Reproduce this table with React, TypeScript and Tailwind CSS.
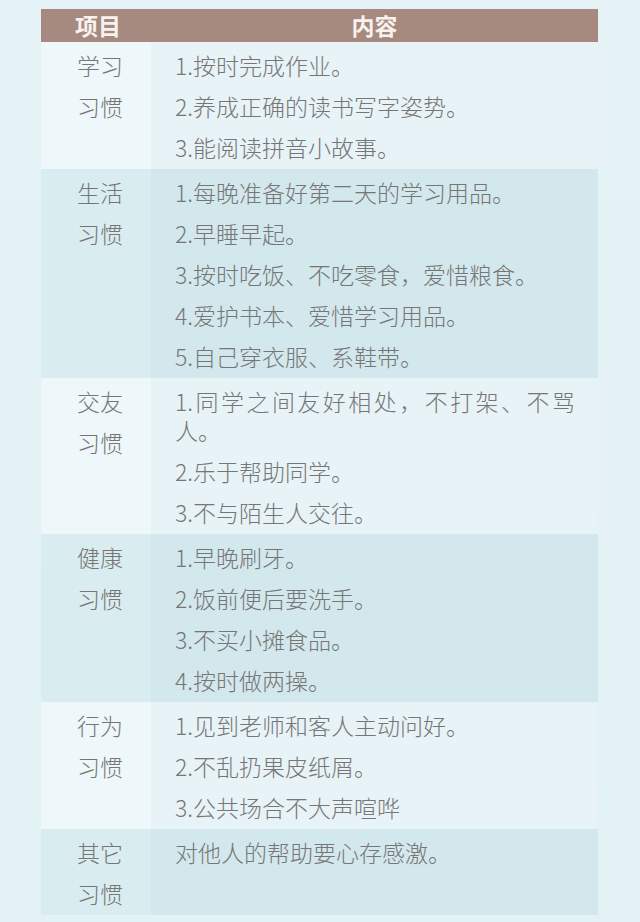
const rows = [
  {
    label: ['学习', '习惯'],
    items: ['1.按时完成作业。', '2.养成正确的读书写字姿势。', '3.能阅读拼音小故事。'],
  },
  {
    label: ['生活', '习惯'],
    items: [
      '1.每晚准备好第二天的学习用品。',
      '2.早睡早起。',
      '3.按时吃饭、不吃零食，爱惜粮食。',
      '4.爱护书本、爱惜学习用品。',
      '5.自己穿衣服、系鞋带。',
    ],
  },
  {
    label: ['交友', '习惯'],
    items: ['1.同学之间友好相处，不打架、不骂人。', '2.乐于帮助同学。', '3.不与陌生人交往。'],
  },
  {
    label: ['健康', '习惯'],
    items: ['1.早晚刷牙。', '2.饭前便后要洗手。', '3.不买小摊食品。', '4.按时做两操。'],
  },
  {
    label: ['行为', '习惯'],
    items: ['1.见到老师和客人主动问好。', '2.不乱扔果皮纸屑。', '3.公共场合不大声喧哗'],
  },
  {
    label: ['其它', '习惯'],
    items: ['对他人的帮助要心存感激。'],
  },
]

function HabitRow({ label, items, shaded }: { label: string[]; items: string[]; shaded: boolean }) {
  return (
    <div className="flex">
      <div className={`w-[110px] shrink-0 pl-[36px] pt-[3px] pb-[1px] ${shaded ? 'bg-[#d9ecf0]' : 'bg-[#eef7f9]'}`}>
        {label.map((t) => (
          <div key={t} className="py-[6px] leading-[29px]">{t}</div>
        ))}
      </div>
      <div className={`flex-1 pl-[24px] pr-[23px] pt-[3px] pb-[1px] ${shaded ? 'bg-[#d3e8ed]' : 'bg-[#e7f3f6]'}`}>
        {items.map((t) => (
          <div key={t} className="py-[6px] leading-[29px] text-justify">{t}</div>
        ))}
      </div>
    </div>
  )
}

export default function App() {
  return (
    <div
      className="min-h-[922px] w-[640px] bg-gradient-to-b from-[#e6f3f6] to-[#e3f2f5] pt-[9px] pb-[9px] text-[23px] font-light text-[#767676]"
      style={{ fontFamily: '"Noto Sans CJK SC", "Noto Sans", sans-serif' }}
    >
      <div className="ml-[41px] w-[557px]">
        <div className="flex h-[33px] items-center bg-[#a68a80] font-bold text-[#f8f2ee] leading-none">
          <div className="w-[110px] shrink-0 pl-[34px]">项目</div>
          <div className="flex-1 text-center">内容</div>
        </div>
        {rows.map((r, i) => (
          <HabitRow key={r.label[0]} label={r.label} items={r.items} shaded={i % 2 === 1} />
        ))}
      </div>
    </div>
  )
}
